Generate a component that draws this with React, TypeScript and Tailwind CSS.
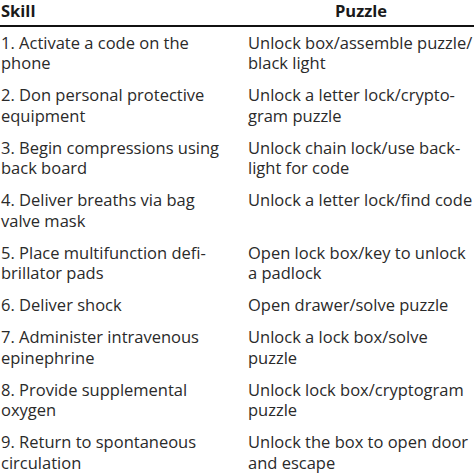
const rows: [string[], string[]][] = [
  [["1. Activate a code on the", "phone"], ["Unlock box/assemble puzzle/", "black light"]],
  [["2. Don personal protective", "equipment"], ["Unlock a letter lock/crypto-", "gram puzzle"]],
  [["3. Begin compressions using", "back board"], ["Unlock chain lock/use back-", "light for code"]],
  [["4. Deliver breaths via bag", "valve mask"], ["Unlock a letter lock/find code"]],
  [["5. Place multifunction defi-", "brillator pads"], ["Open lock box/key to unlock", "a padlock"]],
  [["6. Deliver shock"], ["Open drawer/solve puzzle"]],
  [["7. Administer intravenous", "epinephrine"], ["Unlock a lock box/solve", "puzzle"]],
  [["8. Provide supplemental", "oxygen"], ["Unlock lock box/cryptogram", "puzzle"]],
  [["9. Return to spontaneous", "circulation"], ["Unlock the box to open door", "and escape"]],
];

function Lines({ lines }: { lines: string[] }) {
  return (
    <p className="whitespace-pre">{lines.join("\n")}</p>
  );
}

export default function App() {
  return (
    <div className="h-[473px] w-[474px] overflow-hidden bg-white font-['Open_Sans',sans-serif] text-[16.5px] leading-[20.5px] text-[#2a2a2a]">
      <div className="grid grid-cols-[248px_1fr] border-b-2 border-[#111] pt-[1px] pb-[3.5px] font-bold text-[#1a1a1a]">
        <div className="pl-[1px]">Skill</div>
        <div className="text-center">Puzzle</div>
      </div>
      {rows.map(([skill, puzzle]) => (
        <div key={skill[0]} className="grid grid-cols-[248px_1fr] py-[5.75px]">
          <div className="pl-[1px]">
            <Lines lines={skill} />
          </div>
          <Lines lines={puzzle} />
        </div>
      ))}
    </div>
  );
}
